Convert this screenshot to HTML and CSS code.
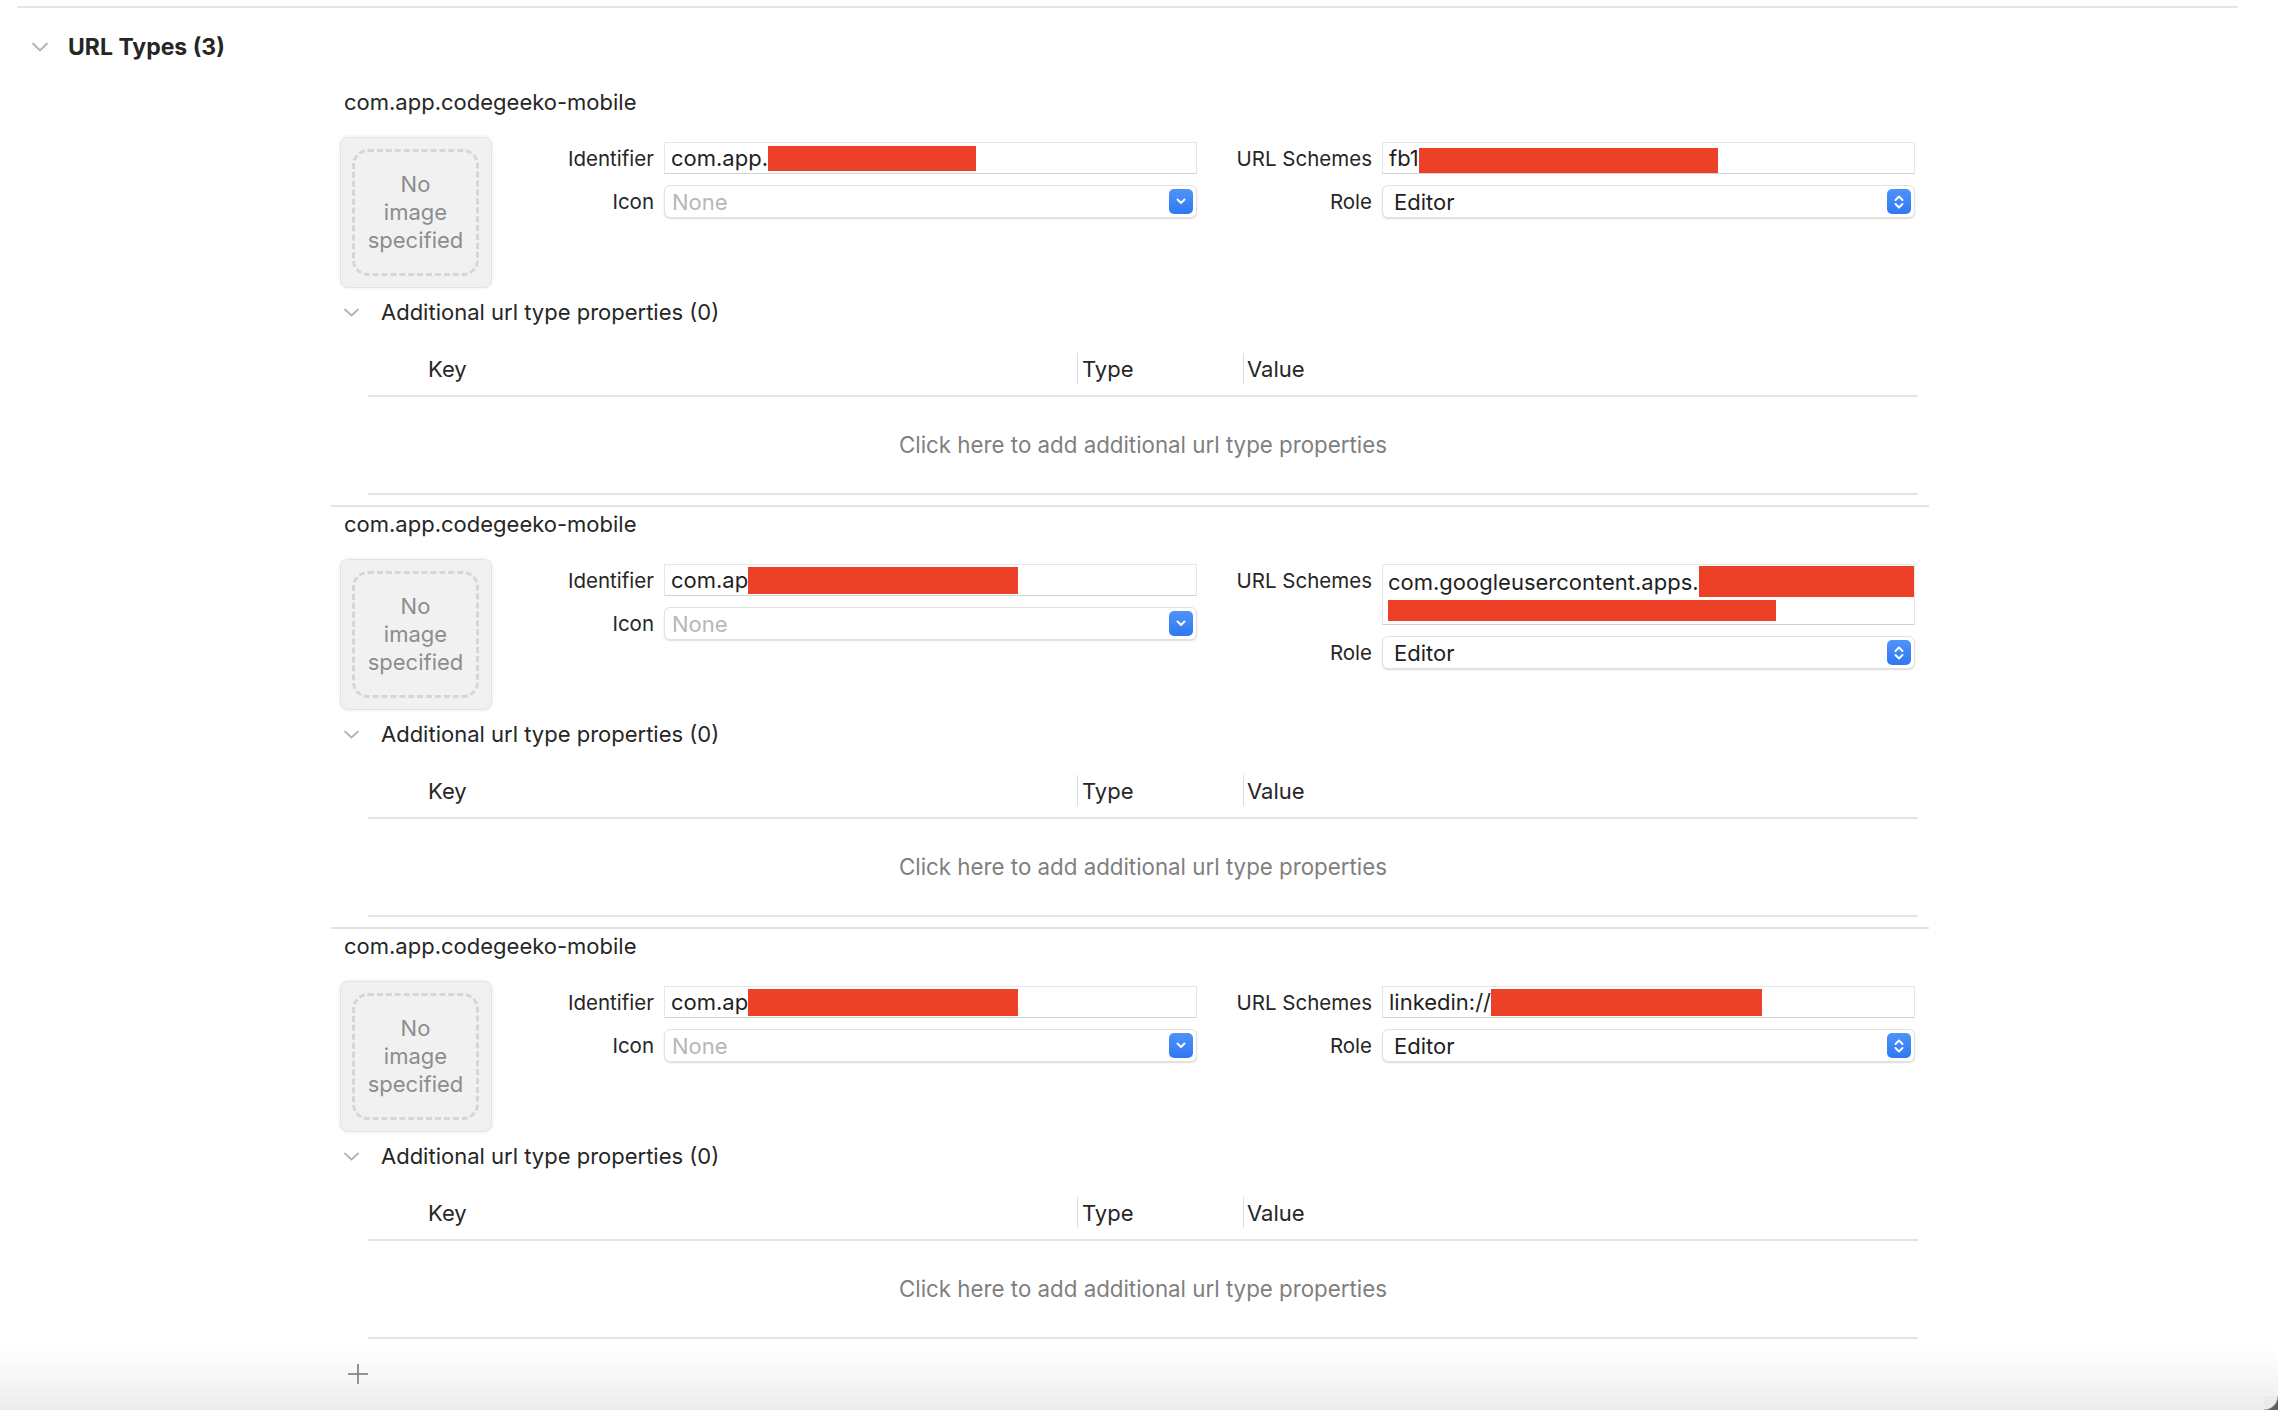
FILE: index.html
```html
<!DOCTYPE html>
<html>
<head>
<meta charset="utf-8">
<title>URL Types</title>
<link rel="stylesheet" href="styles.css">
</head>
<body>
<div class="page">
  <div class="top-rule"></div>
  <div class="group-header">
    <svg class="disclosure" width="16" height="10" viewBox="0 0 16 10"><polyline points="1,1.5 8,8.5 15,1.5"/></svg>
    <span class="group-title">URL Types (3)</span>
  </div>

  <div class="sections">
    <!-- Section 1 -->
    <section class="urltype">
      <div class="ut-title">com.app.codegeeko-mobile</div>
      <div class="ut-body">
        <div class="well"><div class="well-inner">No<br>image<br>specified</div></div>
        <div class="form form-left">
          <div class="label">Identifier</div>
          <div class="field"><span class="val">com.app.</span><span class="redact r-id1"></span></div>
          <div class="label">Icon</div>
          <div class="popup"><span class="placeholder">None</span>
            <span class="btn"><svg width="10" height="7" viewBox="0 0 10 7"><polyline points="1.5,1.5 5,5 8.5,1.5"/></svg></span>
          </div>
        </div>
        <div class="form form-right">
          <div class="label">URL Schemes</div>
          <div class="field"><span class="val">fb1</span><span class="redact r-fb"></span></div>
          <div class="label">Role</div>
          <div class="popup popup-role"><span class="val">Editor</span>
            <span class="btn"><svg width="10" height="16" viewBox="0 0 10 16"><polyline points="1.5,6 5,2.5 8.5,6"/><polyline points="1.5,10 5,13.5 8.5,10"/></svg></span>
          </div>
        </div>
      </div>
      <div class="addl">
        <svg class="disclosure small" width="15" height="9" viewBox="0 0 15 9"><polyline points="1,1.5 7.5,7.5 14,1.5"/></svg>
        <span>Additional url type properties (0)</span>
      </div>
      <div class="table">
        <div class="thead">
          <div class="th th-key">Key</div>
          <div class="th th-type">Type</div>
          <div class="th th-value">Value</div>
        </div>
        <div class="tempty">Click here to add additional url type properties</div>
      </div>
    </section>

    <!-- Section 2 -->
    <section class="urltype">
      <div class="ut-title">com.app.codegeeko-mobile</div>
      <div class="ut-body">
        <div class="well"><div class="well-inner">No<br>image<br>specified</div></div>
        <div class="form form-left">
          <div class="label">Identifier</div>
          <div class="field"><span class="val">com.ap</span><span class="redact r-id2"></span></div>
          <div class="label">Icon</div>
          <div class="popup"><span class="placeholder">None</span>
            <span class="btn"><svg width="10" height="7" viewBox="0 0 10 7"><polyline points="1.5,1.5 5,5 8.5,1.5"/></svg></span>
          </div>
        </div>
        <div class="form form-right">
          <div class="label label-top">URL Schemes</div>
          <div class="field field-tall">
            <div class="tall-line"><span class="val">com.googleusercontent.apps.</span><span class="redact r-fill"></span></div>
            <div class="tall-line2"><span class="redact r-line2"></span></div>
          </div>
          <div class="label">Role</div>
          <div class="popup popup-role"><span class="val">Editor</span>
            <span class="btn"><svg width="10" height="16" viewBox="0 0 10 16"><polyline points="1.5,6 5,2.5 8.5,6"/><polyline points="1.5,10 5,13.5 8.5,10"/></svg></span>
          </div>
        </div>
      </div>
      <div class="addl">
        <svg class="disclosure small" width="15" height="9" viewBox="0 0 15 9"><polyline points="1,1.5 7.5,7.5 14,1.5"/></svg>
        <span>Additional url type properties (0)</span>
      </div>
      <div class="table">
        <div class="thead">
          <div class="th th-key">Key</div>
          <div class="th th-type">Type</div>
          <div class="th th-value">Value</div>
        </div>
        <div class="tempty">Click here to add additional url type properties</div>
      </div>
    </section>

    <!-- Section 3 -->
    <section class="urltype last">
      <div class="ut-title">com.app.codegeeko-mobile</div>
      <div class="ut-body">
        <div class="well"><div class="well-inner">No<br>image<br>specified</div></div>
        <div class="form form-left">
          <div class="label">Identifier</div>
          <div class="field"><span class="val">com.ap</span><span class="redact r-id2"></span></div>
          <div class="label">Icon</div>
          <div class="popup"><span class="placeholder">None</span>
            <span class="btn"><svg width="10" height="7" viewBox="0 0 10 7"><polyline points="1.5,1.5 5,5 8.5,1.5"/></svg></span>
          </div>
        </div>
        <div class="form form-right">
          <div class="label">URL Schemes</div>
          <div class="field"><span class="val">linkedin://</span><span class="redact r-li"></span></div>
          <div class="label">Role</div>
          <div class="popup popup-role"><span class="val">Editor</span>
            <span class="btn"><svg width="10" height="16" viewBox="0 0 10 16"><polyline points="1.5,6 5,2.5 8.5,6"/><polyline points="1.5,10 5,13.5 8.5,10"/></svg></span>
          </div>
        </div>
      </div>
      <div class="addl">
        <svg class="disclosure small" width="15" height="9" viewBox="0 0 15 9"><polyline points="1,1.5 7.5,7.5 14,1.5"/></svg>
        <span>Additional url type properties (0)</span>
      </div>
      <div class="table">
        <div class="thead">
          <div class="th th-key">Key</div>
          <div class="th th-type">Type</div>
          <div class="th th-value">Value</div>
        </div>
        <div class="tempty">Click here to add additional url type properties</div>
      </div>
    </section>
  </div>

  <div class="footer">
    <svg class="plus" width="22" height="22" viewBox="0 0 22 22"><line x1="11" y1="1" x2="11" y2="21"/><line x1="1" y1="11" x2="21" y2="11"/></svg>
  </div>
  <div class="corner"></div>
</div>
</body>
</html>
```

FILE: styles.css
```css
* { box-sizing: border-box; }

html, body {
  margin: 0;
  padding: 0;
  background: #ffffff;
}

body {
  font-family: "Inter", "Liberation Sans", "DejaVu Sans", sans-serif;
  font-size: 22px;
  color: #232323;
}

.page {
  position: relative;
  width: 2278px;
  height: 1410px;
  overflow: hidden;
  background: #ffffff;
}

.top-rule {
  margin-left: 17px;
  margin-top: 6px;
  width: 2221px;
  height: 2px;
  background: #e6e6e6;
}

.group-header {
  height: 76px;
  display: flex;
  align-items: center;
  padding-left: 32px;
  padding-top: 2px;
  gap: 20px;
  margin-bottom: 1px;
}

.disclosure polyline {
  fill: none;
  stroke: #b3b3b3;
  stroke-width: 1.8;
  stroke-linecap: round;
  stroke-linejoin: round;
}

.group-title {
  font-weight: 700;
  font-size: 23px;
  color: #262626;
}

.sections {
  margin-left: 331px;
  width: 1598px;
}

.urltype {
  display: flex;
  flex-direction: column;
  padding-bottom: 10px;
  border-bottom: 2px solid #e3e3e3;
}

.urltype.last {
  padding-bottom: 0;
  border-bottom: none;
}

.ut-title {
  height: 34px;
  line-height: 34px;
  padding-left: 13px;
  color: #262626;
}

.ut-body {
  margin-top: 15px;
  height: 157px;
  display: flex;
  align-items: flex-start;
}

.well {
  margin-left: 9px;
  margin-top: 3px;
  width: 152px;
  height: 151px;
  border: 1px solid #e3e3e3;
  border-radius: 8px;
  background: #f1f1f1;
  box-shadow: 0 0 0 2px #f8f8f8;
  padding: 11px 0 0 11px;
}

.well-inner {
  width: 127px;
  height: 127px;
  border: 3px dashed #d6d6d6;
  border-radius: 16px;
  display: flex;
  align-items: center;
  justify-content: center;
  text-align: center;
  color: #8d8d8d;
  font-size: 22px;
  line-height: 28px;
  padding-bottom: 1px;
}

.form {
  margin-top: 8px;
  display: grid;
  column-gap: 10px;
  row-gap: 11px;
  align-items: center;
}

.form-left {
  grid-template-columns: 162px 533px;
}

.form-right {
  grid-template-columns: 175px 533px;
}

.label {
  text-align: right;
  color: #262626;
  white-space: nowrap;
  font-size: 20.5px;
}

.label-top {
  align-self: start;
  padding-top: 4px;
}

.field {
  height: 32px;
  background: #ffffff;
  border: 1px solid #e6e6e6;
  border-bottom-color: #d2d2d2;
  display: flex;
  align-items: center;
  padding-left: 6px;
  overflow: hidden;
  white-space: nowrap;
}

.field-tall {
  height: 61px;
  display: block;
  padding: 1px 0 0 5px;
}

.tall-line {
  display: flex;
  align-items: center;
  height: 31px;
}

.tall-line2 {
  display: flex;
  margin-top: 3px;
}

.val {
  color: #1f1f1f;
}

.redact {
  display: inline-block;
  background: #ec4027;
  flex: none;
}

.r-id1 { width: 208px; height: 25px; }
.r-id2 { width: 270px; height: 27px; }
.r-fb { width: 299px; height: 26px; margin-top: 5px; }
.r-li { width: 271px; height: 27px; }
.r-fill { flex: 1; height: 31px; }
.r-line2 { width: 388px; height: 21px; }

.popup {
  position: relative;
  height: 33px;
  background: #ffffff;
  border: 1px solid #e2e2e2;
  border-radius: 6px;
  box-shadow: 0 1px 1.5px rgba(0, 0, 0, 0.14);
  display: flex;
  align-items: center;
  padding-left: 7px;
}

.popup-role {
  padding-left: 11px;
}

.placeholder {
  color: #b7b7b7;
}

.btn {
  position: absolute;
  right: 3px;
  top: 3px;
  width: 24px;
  height: 25px;
  border-radius: 5px;
  background: linear-gradient(#4f93f9, #2f78f2);
  display: flex;
  align-items: center;
  justify-content: center;
}

.btn polyline {
  fill: none;
  stroke: #ffffff;
  stroke-width: 1.9;
  stroke-linecap: round;
  stroke-linejoin: round;
}

.addl {
  height: 42px;
  display: flex;
  align-items: center;
  padding-left: 13px;
  gap: 22px;
  color: #262626;
}

.table {
  margin-top: 20px;
  margin-left: 37px;
  width: 1550px;
}

.thead {
  height: 44px;
  border-bottom: 2px solid #e4e4e4;
  display: flex;
  align-items: flex-start;
}

.th {
  height: 31px;
  display: flex;
  align-items: center;
  color: #262626;
}

.th-key {
  width: 709px;
  padding-left: 60px;
}

.th-type {
  width: 166px;
  padding-left: 4px;
  border-left: 1px solid #dddddd;
}

.th-value {
  flex: 1;
  padding-left: 3px;
  border-left: 1px solid #dddddd;
}

.tempty {
  height: 98px;
  border-bottom: 2px solid #e4e4e4;
  display: flex;
  align-items: center;
  justify-content: center;
  color: #7f7f7f;
  font-size: 22.3px;
  padding-bottom: 2px;
}

.footer {
  height: 74px;
  display: flex;
  align-items: center;
  padding-left: 347px;
  padding-bottom: 4px;
  background: linear-gradient(to bottom, #ffffff 0px, #ffffff 8px, #f6f6f6 40px, #ebebeb 100%);
}

.plus line {
  stroke: #7a7a7a;
  stroke-width: 1.6;
}

.corner {
  position: absolute;
  right: 0;
  bottom: 0;
  width: 14px;
  height: 14px;
  background: radial-gradient(circle at 0 0, #ebebeb 13px, #5e5e5e 14.5px);
}
```
